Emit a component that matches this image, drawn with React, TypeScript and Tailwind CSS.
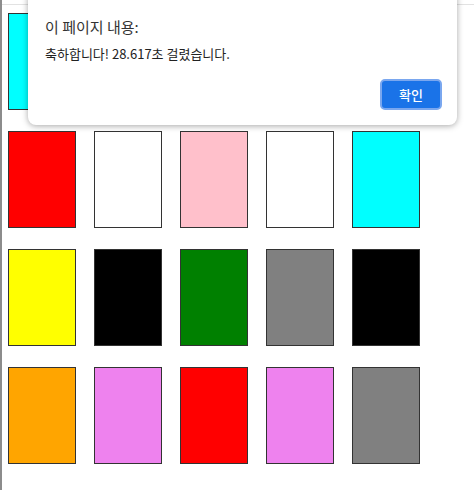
import React from "react";

const rows = [
  ["#00ffff", "#ff0000", "#ffffff", "#ffc0cb", "#ffffff"],
  ["#ff0000", "#ffffff", "#ffc0cb", "#ffffff", "#00ffff"],
  ["#ffff00", "#000000", "#008000", "#808080", "#000000"],
  ["#ffa500", "#ee82ee", "#ff0000", "#ee82ee", "#808080"],
];

function Card({ color }: { color: string }) {
  return (
    <div
      className="w-[68px] h-[97px] border border-[#333333]"
      style={{ backgroundColor: color }}
    />
  );
}

function AlertDialog() {
  return (
    <div
      className="absolute left-[26px] top-[-10px] w-[429px] h-[135px] bg-white rounded-lg shadow-[0_1px_6px_rgba(0,0,0,0.35)] px-[17px] pt-[27px]"
      style={{ fontFamily: '"Noto Sans CJK KR", "Noto Sans", sans-serif' }}
    >
      <div className="text-[15px] leading-[20px] text-[#333333]">이 페이지 내용:</div>
      <div className="mt-[9px] text-[13px] leading-[16px] text-[#222222]">
        축하합니다! 28.617초 걸렸습니다.
      </div>
      <div className="flex justify-end mt-[17px]">
        <button className="w-[62px] h-[31px] mr-[-2px] rounded-[5px] bg-[#1a73e8] border-2 border-[#7aa7ef] text-white text-[13px] font-medium">
          확인
        </button>
      </div>
    </div>
  );
}

export default function App() {
  return (
    <div className="relative w-[474px] h-[490px] overflow-hidden bg-white border-l-2 border-[#8c8c8c]">
      <div className="h-[4px]" />
      <div className="border-t border-[#e2e2e2] pt-[8px] pl-[6px]">
        <div className="grid grid-cols-[repeat(5,68px)] gap-x-[18px] gap-y-[21px]">
          {rows.map((row, i) =>
            row.map((c, j) => <Card key={`${i}-${j}`} color={c} />)
          )}
        </div>
      </div>
      <AlertDialog />
    </div>
  );
}
